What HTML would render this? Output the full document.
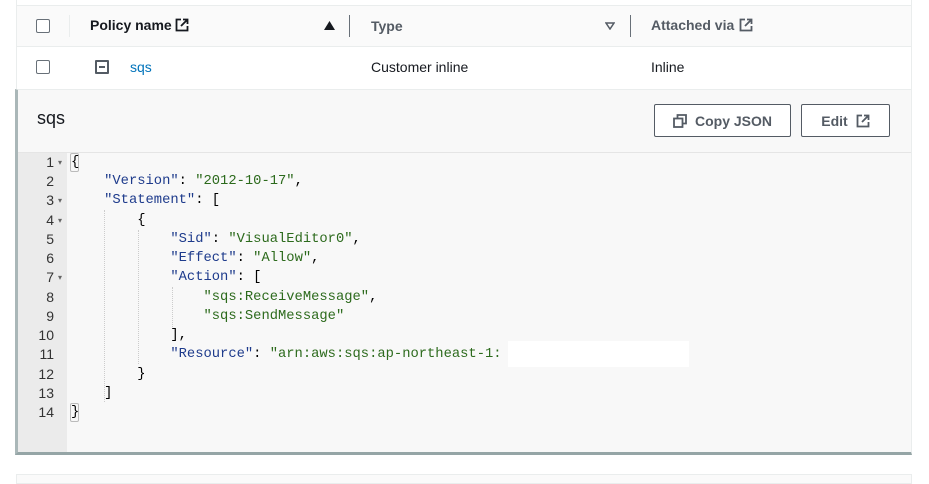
<!DOCTYPE html>
<html><head><style>
*{margin:0;padding:0;box-sizing:border-box}
body{width:929px;height:479px;background:#fff;font-family:"Liberation Sans",sans-serif;position:relative;overflow:hidden;color:#16191f}
.abs{position:absolute}
.cb{position:absolute;width:14px;height:14px;border:1.5px solid #687078;border-radius:2px;background:#fff}
.hdr{font-weight:bold;font-size:14px;color:#16191f}
.code{font-family:"Liberation Mono",monospace;font-size:13.8px;line-height:19.23px;white-space:pre;color:#000}
.k{color:#1e3b8c}.s{color:#2c6a1c}
.ln{font-family:"Liberation Sans",sans-serif;font-size:14px;line-height:19.23px;text-align:right;color:#333}
.btn{position:absolute;height:33px;border:1px solid #545b64;border-radius:2px;background:#fff;font-weight:bold;font-size:14px;color:#545b64;display:flex;align-items:center;justify-content:center;gap:8px}
.guide{position:absolute;border-left:1px dotted #ccc}
</style></head><body>
<div class="abs" style="left:16px;top:0;width:896px;height:454px;border-left:1px solid #eaeded;border-right:1px solid #eaeded"></div>
<!-- header -->
<div class="abs" style="left:17px;top:5px;width:894px;height:42px;background:#fafafa;border-top:1px solid #eaeded;border-bottom:1px solid #eaeded"></div>
<div class="cb" style="left:36px;top:19px"></div>
<div class="abs" style="left:69px;top:15px;width:1px;height:22px;background:#eaeded"></div>
<div class="abs hdr" style="left:90px;top:17px">Policy name</div>
<svg class="abs" style="left:175px;top:18px" width="14" height="14" viewBox="0 0 14 14" fill="none" stroke="#16191f" stroke-width="1.8"><path d="M6 1.5H1.5v11h11V8M8 1.5h4.5V6M12.5 1.5L6 8"/></svg>
<svg class="abs" style="left:324px;top:21px" width="11" height="9" viewBox="0 0 11 9"><path d="M5.5 0L11 9H0z" fill="#16191f"/></svg>
<div class="abs" style="left:349px;top:15px;width:1px;height:22px;background:#687078"></div>
<div class="abs hdr" style="left:371px;top:18px;color:#545b64">Type</div>
<svg class="abs" style="left:605px;top:22px" width="10" height="8" viewBox="0 0 10 8"><path d="M1 1h8L5 7z" fill="none" stroke="#545b64" stroke-width="1.5"/></svg>
<div class="abs" style="left:630px;top:15px;width:1px;height:22px;background:#687078"></div>
<div class="abs hdr" style="left:651px;top:17px;color:#545b64">Attached via</div>
<svg class="abs" style="left:739px;top:18px" width="14" height="14" viewBox="0 0 14 14" fill="none" stroke="#545b64" stroke-width="1.8"><path d="M6 1.5H1.5v11h11V8M8 1.5h4.5V6M12.5 1.5L6 8"/></svg>
<!-- row -->
<div class="cb" style="left:36px;top:60px"></div>
<div class="abs" style="left:95px;top:60px;width:14px;height:14px;border:2px solid #545b64;border-radius:1px"><div style="position:absolute;left:2px;top:4px;width:6px;height:2px;background:#545b64"></div></div>
<div class="abs" style="left:130px;top:59px;font-size:14px;color:#0073bb">sqs</div>
<div class="abs" style="left:371px;top:59px;font-size:14px">Customer inline</div>
<div class="abs" style="left:651px;top:59px;font-size:14px">Inline</div>
<!-- panel -->
<div class="abs" style="left:15px;top:89px;width:897px;height:366px;background:#f8f8f8;border-left:3px solid #aab7b8;border-top:1px solid #eaeded;border-bottom:3px solid #95a5a6;border-right:1px solid #eaeded"></div>
<div class="abs" style="left:37px;top:108px;font-size:18px">sqs</div>
<div class="btn" style="left:654px;top:104px;width:137px"><svg width="14" height="14" viewBox="0 0 14 14" fill="none" stroke="#545b64" stroke-width="1.8"><rect x="1" y="4.5" width="8.5" height="8.5"/><path d="M4.5 4.5V1h8.5v8.5H9.5"/></svg>Copy JSON</div>
<div class="btn" style="left:801px;top:104px;width:89px">Edit <svg width="14" height="14" viewBox="0 0 14 14" fill="none" stroke="#545b64" stroke-width="1.8"><path d="M6 1.5H1.5v11h11V8M8 1.5h4.5V6M12.5 1.5L6 8"/></svg></div>
<div class="abs" style="left:18px;top:152px;width:893px;height:1px;background:#e5e5e5"></div>
<div class="abs" style="left:18px;top:153px;width:49px;height:299px;background:#ebebeb"></div>
<div class="abs ln" style="left:18px;top:153px;width:36px">1<br>2<br>3<br>4<br>5<br>6<br>7<br>8<br>9<br>10<br>11<br>12<br>13<br>14</div>
<div class="abs" style="left:58px;top:153px;font-size:8px;line-height:19.23px;color:#666">▾<br><br>▾<br>▾<br><br><br>▾</div>
<div class="guide" style="left:104px;top:210px;height:192px"></div>
<div class="guide" style="left:138px;top:230px;height:134px"></div>
<div class="guide" style="left:172px;top:287px;height:40px"></div>
<div class="abs" style="left:70px;top:153px;width:9px;height:19px;border:1px solid #bbb;border-radius:2px"></div>
<div class="abs" style="left:70px;top:403px;width:9px;height:19px;border:1px solid #bbb;border-radius:2px"></div>
<div class="abs code" style="left:71px;top:153px">{
    <span class="k">"Version"</span>: <span class="s">"2012-10-17"</span>,
    <span class="k">"Statement"</span>: [
        {
            <span class="k">"Sid"</span>: <span class="s">"VisualEditor0"</span>,
            <span class="k">"Effect"</span>: <span class="s">"Allow"</span>,
            <span class="k">"Action"</span>: [
                <span class="s">"sqs:ReceiveMessage"</span>,
                <span class="s">"sqs:SendMessage"</span>
            ],
            <span class="k">"Resource"</span>: <span class="s">"arn:aws:sqs:ap-northeast-1:</span>
        }
    ]
}</div>
<div class="abs" style="left:508px;top:341px;width:181px;height:26px;background:#fff"></div>
<!-- next box -->
<div class="abs" style="left:16px;top:474px;width:896px;height:10px;border:1px solid #eaeded;background:#fafafa"></div>
</body></html>
